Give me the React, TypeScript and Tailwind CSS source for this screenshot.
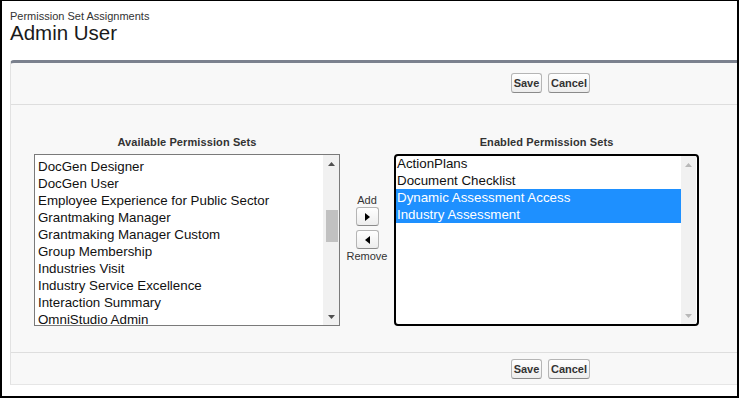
import React from "react";

const available = [
  "DocGen Admin",
  "DocGen Designer",
  "DocGen User",
  "Employee Experience for Public Sector",
  "Grantmaking Manager",
  "Grantmaking Manager Custom",
  "Group Membership",
  "Industries Visit",
  "Industry Service Excellence",
  "Interaction Summary",
  "OmniStudio Admin",
];

const enabled = [
  { name: "ActionPlans", selected: false },
  { name: "Document Checklist", selected: false },
  { name: "Dynamic Assessment Access", selected: true },
  { name: "Industry Assessment", selected: true },
];

const Btn: React.FC<{ label: string; width: string }> = ({ label, width }) => (
  <button
    className={`${width} h-[20px] flex items-center justify-center rounded-[3px] border border-[#b5b5b5] border-b-[#8a8a8a] bg-linear-to-b from-white to-[#ededed] text-[11px] font-bold text-[#333] leading-none`}
  >
    {label}
  </button>
);

const ButtonRow: React.FC = () => (
  <div className="flex gap-[6px] pl-[500px]">
    <Btn label="Save" width="w-[31px]" />
    <Btn label="Cancel" width="w-[42px]" />
  </div>
);

// scrollbar arrows
const ArrowUp: React.FC<{ color: string }> = ({ color }) => (
  <svg width="7" height="4" viewBox="0 0 7 4">
    <polygon points="3.5,0 7,4 0,4" fill={color} />
  </svg>
);

const ArrowDown: React.FC<{ color: string }> = ({ color }) => (
  <svg width="7" height="4" viewBox="0 0 7 4">
    <polygon points="0,0 7,0 3.5,4" fill={color} />
  </svg>
);

const MoveButton: React.FC<{ dir: "left" | "right" }> = ({ dir }) => (
  <button className="w-[23px] h-[19px] flex items-center justify-center rounded-[3px] border border-[#b5b5b5] border-b-[#8a8a8a] bg-linear-to-b from-white to-[#ededed]">
    <svg width="5" height="8" viewBox="0 0 5 8">
      {dir === "right" ? (
        <polygon points="0,0 5,4 0,8" fill="#000" />
      ) : (
        <polygon points="5,0 0,4 5,8" fill="#000" />
      )}
    </svg>
  </button>
);

export default function App() {
  return (
    <div
      className="w-[739px] h-[398px] bg-white border-l-2 border-t border-r-2 border-b-2 border-black overflow-hidden"
      style={{ fontFamily: '"Liberation Sans", Arial, sans-serif' }}
    >
      {/* Page header */}
      <div className="h-[59px] pl-[8px] pt-[9px]">
        <div className="text-[11px] leading-[12px] text-[#333]">Permission Set Assignments</div>
        <div className="mt-[1px] text-[20.5px] leading-[20px] text-[#1a1a1a]">Admin User</div>
      </div>

      {/* Panel */}
      <div className="ml-[8px] w-[1081px] bg-[#f8f8f8] border-t-[3px] border-t-[#7b818e] border-l border-l-[#e2e2e2] border-b border-b-[#e6e6e6] rounded-tl-[4px]">
        <div className="h-[42px] pt-[10px] border-b border-[#dedede]">
          <ButtonRow />
        </div>

        <div className="flex pl-[23px] pt-[31px] pb-[26px] border-b border-[#dedede]">
          {/* Available */}
          <div className="w-[306px] flex flex-col">
            <div className="text-center text-[11px] leading-[13px] font-bold text-[#333] tracking-[0.1px]">
              Available Permission Sets
            </div>
            <div className="mt-[5px] h-[172px] border border-[#7a7a7a] bg-white flex overflow-hidden">
              <div className="flex-1 overflow-hidden">
                <div className="-mt-[14px] pl-[3px]">
                  {available.map((item) => (
                    <div key={item} className="h-[17px] text-[13.33px] leading-[17px] text-[#111] whitespace-nowrap">
                      {item}
                    </div>
                  ))}
                </div>
              </div>
              <div className="w-[16px] bg-[#f1f1f1] flex flex-col items-center">
                <div className="h-[17px] flex items-center justify-center">
                  <ArrowUp color="#505050" />
                </div>
                <div className="h-[38px]" />
                <div className="w-[12px] h-[32px] bg-[#c1c1c1] ml-[1px]" />
                <div className="flex-1" />
                <div className="h-[17px] flex items-center justify-center">
                  <ArrowDown color="#505050" />
                </div>
              </div>
            </div>
          </div>

          {/* Add / Remove */}
          <div className="w-[54px] flex flex-col items-center pt-[58px] text-[11px] leading-[13px] text-[#333]">
            <div>Add</div>
            <MoveButton dir="right" />
            <div className="h-[4px]" />
            <MoveButton dir="left" />
            <div className="mt-[1px]">Remove</div>
          </div>

          {/* Enabled */}
          <div className="w-[305px] flex flex-col">
            <div className="text-center text-[11px] leading-[13px] font-bold text-[#333] tracking-[0.1px]">
              Enabled Permission Sets
            </div>
            <div className="mt-[5px] h-[172px] border-2 border-black rounded-[4px] bg-white flex overflow-hidden">
              <div className="flex-1 overflow-hidden">
                <div className="-mt-[1px]">
                  {enabled.map((item) => (
                    <div
                      key={item.name}
                      className={`h-[17px] pl-[1px] text-[13.33px] leading-[17px] whitespace-nowrap ${
                        item.selected ? "bg-[#1e90ff] text-white" : "text-[#111]"
                      }`}
                    >
                      {item.name}
                    </div>
                  ))}
                </div>
              </div>
              <div className="w-[15px] mr-[1px] bg-[#f1f1f1] flex flex-col items-center justify-between">
                <div className="h-[17px] flex items-center justify-center">
                  <ArrowUp color="#b8b8b8" />
                </div>
                <div className="h-[17px] flex items-center justify-center">
                  <ArrowDown color="#b8b8b8" />
                </div>
              </div>
            </div>
          </div>
        </div>

        <div className="h-[31px] pt-[6px]">
          <ButtonRow />
        </div>
      </div>
    </div>
  );
}
